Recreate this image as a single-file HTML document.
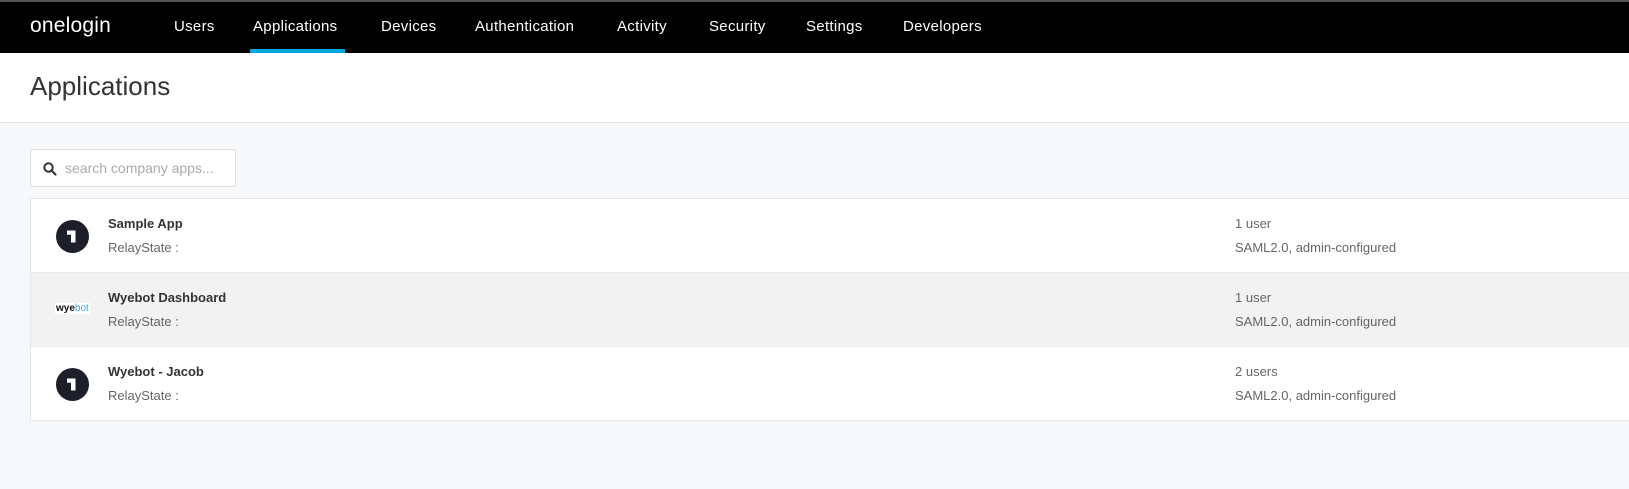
<!DOCTYPE html>
<html><head><style>
*{margin:0;padding:0;box-sizing:border-box}
body{width:1629px;height:489px;overflow:hidden;background:#f7f8fa;font-family:"Liberation Sans",sans-serif;position:relative}
.top{position:absolute;left:0;top:0;width:1629px;height:53px;background:#000;border-top:2px solid #555}
.logo{position:absolute;left:30px;top:12px;color:#fff;font-size:21px;letter-spacing:0.2px}
.nav{position:absolute;top:16px;color:#fff;font-size:15px;letter-spacing:0.3px}
.ul{position:absolute;left:250px;top:49px;width:95px;height:4px;background:#00a9e0}
.hdr{position:absolute;left:0;top:53px;width:1629px;height:70px;background:#fff;border-bottom:1px solid #e3e5e8}
.hdr h1{position:absolute;left:30px;top:18px;font-weight:normal;font-size:26px;color:#333}
.search{position:absolute;left:30px;top:149px;width:206px;height:38px;background:#fff;border:1px solid #dcdee2;border-radius:2px}
.search span{position:absolute;left:34px;top:10px;font-size:14px;color:#aaa}
.list{position:absolute;left:30px;top:198px;width:1599px;height:223px;background:#fff;border:1px solid #e6e7ea;border-right:none}
.row{position:absolute;left:0;width:1599px;height:74px;border-bottom:1px solid #ececec}
.row.g{background:#f2f2f2}
.t{position:absolute;left:77px;top:17px;font-size:13px;font-weight:bold;color:#333}
.r{position:absolute;left:77px;top:41px;font-size:13px;color:#666}
.u{position:absolute;left:1204px;top:17px;font-size:13px;color:#666}
.s{position:absolute;left:1204px;top:41px;font-size:13px;color:#666}
.ic{position:absolute;left:25px;top:21px;width:33px;height:33px;border-radius:50%;background:#1c1f2a}
</style></head><body>
<div class="top">
<div class="logo">onelogin</div>
<div class="nav" style="left:174px">Users</div>
<div class="nav" style="left:253px">Applications</div>
<div class="nav" style="left:381px">Devices</div>
<div class="nav" style="left:475px">Authentication</div>
<div class="nav" style="left:617px">Activity</div>
<div class="nav" style="left:709px">Security</div>
<div class="nav" style="left:806px">Settings</div>
<div class="nav" style="left:903px">Developers</div>
</div>
<div class="ul"></div>
<div class="hdr"><h1>Applications</h1></div>
<div class="search">
<svg style="position:absolute;left:12px;top:12px" width="14" height="14" viewBox="0 0 14 14"><circle cx="5.5" cy="5.5" r="4.2" fill="none" stroke="#333" stroke-width="2"/><path d="M8.5 8.5L12.5 12.5" stroke="#333" stroke-width="2.2" stroke-linecap="round"/></svg>
<span>search company apps...</span></div>
<div class="list">
<div class="row" style="top:0">
<div class="ic"><svg width="33" height="33" viewBox="0 0 33 33"><path d="M11 10.5h8.5v12h-4.5v-7.8h-4z" fill="#fff"/></svg></div>
<div class="t">Sample App</div><div class="r">RelayState :</div>
<div class="u">1 user</div><div class="s">SAML2.0, admin-configured</div></div>
<div class="row g" style="top:74px">
<div style="position:absolute;left:24px;top:30px;font-size:10px;font-weight:bold;color:#111;background:#fff;padding:0 1px">wye<span style="color:#29aee6;font-weight:normal">bot</span></div>
<div class="t">Wyebot Dashboard</div><div class="r">RelayState :</div>
<div class="u">1 user</div><div class="s">SAML2.0, admin-configured</div></div>
<div class="row" style="top:148px;border-bottom:none">
<div class="ic"><svg width="33" height="33" viewBox="0 0 33 33"><path d="M11 10.5h8.5v12h-4.5v-7.8h-4z" fill="#fff"/></svg></div>
<div class="t">Wyebot - Jacob</div><div class="r">RelayState :</div>
<div class="u">2 users</div><div class="s">SAML2.0, admin-configured</div></div>
</div>
</body></html>
